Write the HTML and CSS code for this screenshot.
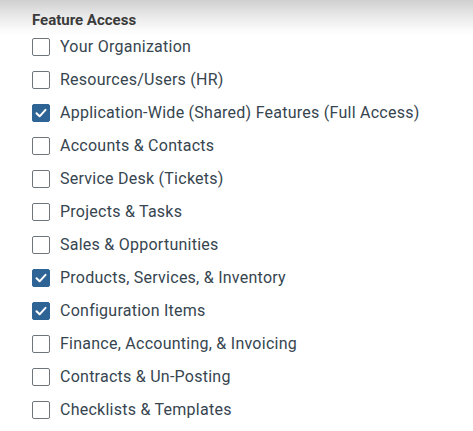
FILE: index.html
```html
<!DOCTYPE html>
<html>
<head>
<meta charset="utf-8">
<link rel="stylesheet" href="styles.css">
</head>
<body>
<div class="panel">
  <div class="title">Feature Access</div>
  <ul class="list">
    <li class="item"><span class="box"></span><span class="label">Your Organization</span></li>
    <li class="item"><span class="box"></span><span class="label">Resources/Users (HR)</span></li>
    <li class="item"><span class="box checked"><svg viewBox="0 0 18 18" width="18" height="18"><path d="M4.5 9.3 L7.6 12.3 L13.5 5.8" fill="none" stroke="#fff" stroke-width="2" stroke-linecap="round" stroke-linejoin="round"/></svg></span><span class="label">Application-Wide (Shared) Features (Full Access)</span></li>
    <li class="item"><span class="box"></span><span class="label">Accounts &amp; Contacts</span></li>
    <li class="item"><span class="box"></span><span class="label">Service Desk (Tickets)</span></li>
    <li class="item"><span class="box"></span><span class="label">Projects &amp; Tasks</span></li>
    <li class="item"><span class="box"></span><span class="label">Sales &amp; Opportunities</span></li>
    <li class="item"><span class="box checked"><svg viewBox="0 0 18 18" width="18" height="18"><path d="M4.5 9.3 L7.6 12.3 L13.5 5.8" fill="none" stroke="#fff" stroke-width="2" stroke-linecap="round" stroke-linejoin="round"/></svg></span><span class="label">Products, Services, &amp; Inventory</span></li>
    <li class="item"><span class="box checked"><svg viewBox="0 0 18 18" width="18" height="18"><path d="M4.5 9.3 L7.6 12.3 L13.5 5.8" fill="none" stroke="#fff" stroke-width="2" stroke-linecap="round" stroke-linejoin="round"/></svg></span><span class="label">Configuration Items</span></li>
    <li class="item"><span class="box"></span><span class="label">Finance, Accounting, &amp; Invoicing</span></li>
    <li class="item"><span class="box"></span><span class="label">Contracts &amp; Un-Posting</span></li>
    <li class="item"><span class="box"></span><span class="label">Checklists &amp; Templates</span></li>
  </ul>
</div>
</body>
</html>
```
FILE: styles.css
```css
html, body {
  margin: 0;
  padding: 0;
}
body {
  width: 473px;
  height: 431px;
  overflow: hidden;
  background: linear-gradient(to bottom, #cfcfcf 0px, #e9e9e9 16px, #fbfbfb 30px, #ffffff 36px);
  font-family: Roboto, "Liberation Sans", sans-serif;
}
.panel {
  padding: 12px 0 0 32px;
}
.title {
  font-size: 15px;
  font-weight: 700;
  color: #3b3b3b;
  line-height: 17px;
}
.list {
  list-style: none;
  margin: 0;
  padding: 0;
  display: flex;
  flex-direction: column;
  margin-top: 1px;
}
.item {
  display: flex;
  align-items: center;
  height: 33px;
}
.box {
  box-sizing: border-box;
  width: 18px;
  height: 18px;
  border: 1.5px solid #6f767b;
  border-radius: 2px;
  flex: none;
  display: flex;
  align-items: center;
  justify-content: center;
  background: #fff;
}
.box.checked {
  background: #2d6395;
  border-color: #2d6395;
}
.box.checked svg {
  flex: none;
}
.label {
  margin-left: 10px;
  font-size: 16px;
  color: #36454f;
  letter-spacing: 0.25px;
}
```
